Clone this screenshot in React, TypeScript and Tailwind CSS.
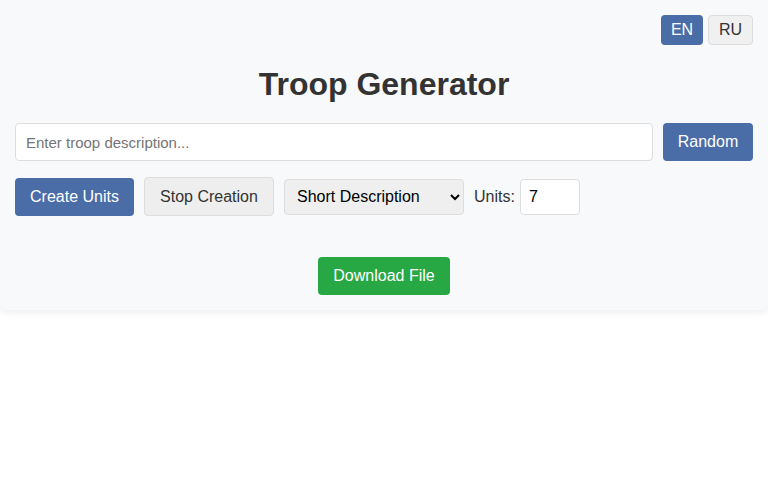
import React from "react";

export default function App() {
  return (
    <div className="min-h-[480px] bg-white" style={{ fontFamily: '"Liberation Sans", Arial, sans-serif' }}>
      <div className="bg-[#f8f9fa] rounded-b-lg shadow-[0_2px_8px_rgba(0,0,0,0.08)] px-[15px] pt-[15px] pb-[15px] h-[310px]">
        <div className="flex justify-end gap-[5px]">
          <button className="h-[30px] w-[42px] rounded bg-[#4a6da7] text-white text-[16px]">EN</button>
          <button className="h-[30px] w-[45px] rounded bg-[#f0f0f0] border border-[#ddd] text-[#333] text-[16px]">RU</button>
        </div>
        <h1 className="text-center text-[32px] font-bold text-[#333] mt-[21px] mb-[20px] leading-[37px]">Troop Generator</h1>
        <div className="flex gap-[10px]">
          <input
            className="flex-1 h-[38px] rounded border border-[#ddd] bg-white px-[10px] text-[15px] text-[#333] placeholder:text-[#757575] outline-none"
            placeholder="Enter troop description..."
          />
          <button className="h-[38px] w-[90px] rounded bg-[#4a6da7] text-white text-[16px]">Random</button>
        </div>
        <div className="flex items-center gap-[10px] mt-[16px]">
          <button className="h-[38px] w-[119px] rounded bg-[#4a6da7] text-white text-[16px]">Create Units</button>
          <button className="h-[39px] w-[130px] rounded bg-[#eeeeee] border border-[#ddd] text-[#333] text-[16px]">Stop Creation</button>
          <select className="h-[36px] w-[180px] rounded border border-[#ddd] bg-[#efefef] px-[8px] text-[16px] text-black">
            <option>Short Description</option>
          </select>
          <label className="text-[16px] text-[#333]">Units:</label>
          <input className="-ml-[5px] h-[36px] w-[60px] rounded border border-[#ddd] bg-white px-[8px] text-[16px] text-black outline-none" defaultValue="7" />
        </div>
        <div className="flex justify-center mt-[41px]">
          <button className="h-[38px] w-[132px] rounded bg-[#28a745] text-white text-[16px]">Download File</button>
        </div>
      </div>
    </div>
  );
}
